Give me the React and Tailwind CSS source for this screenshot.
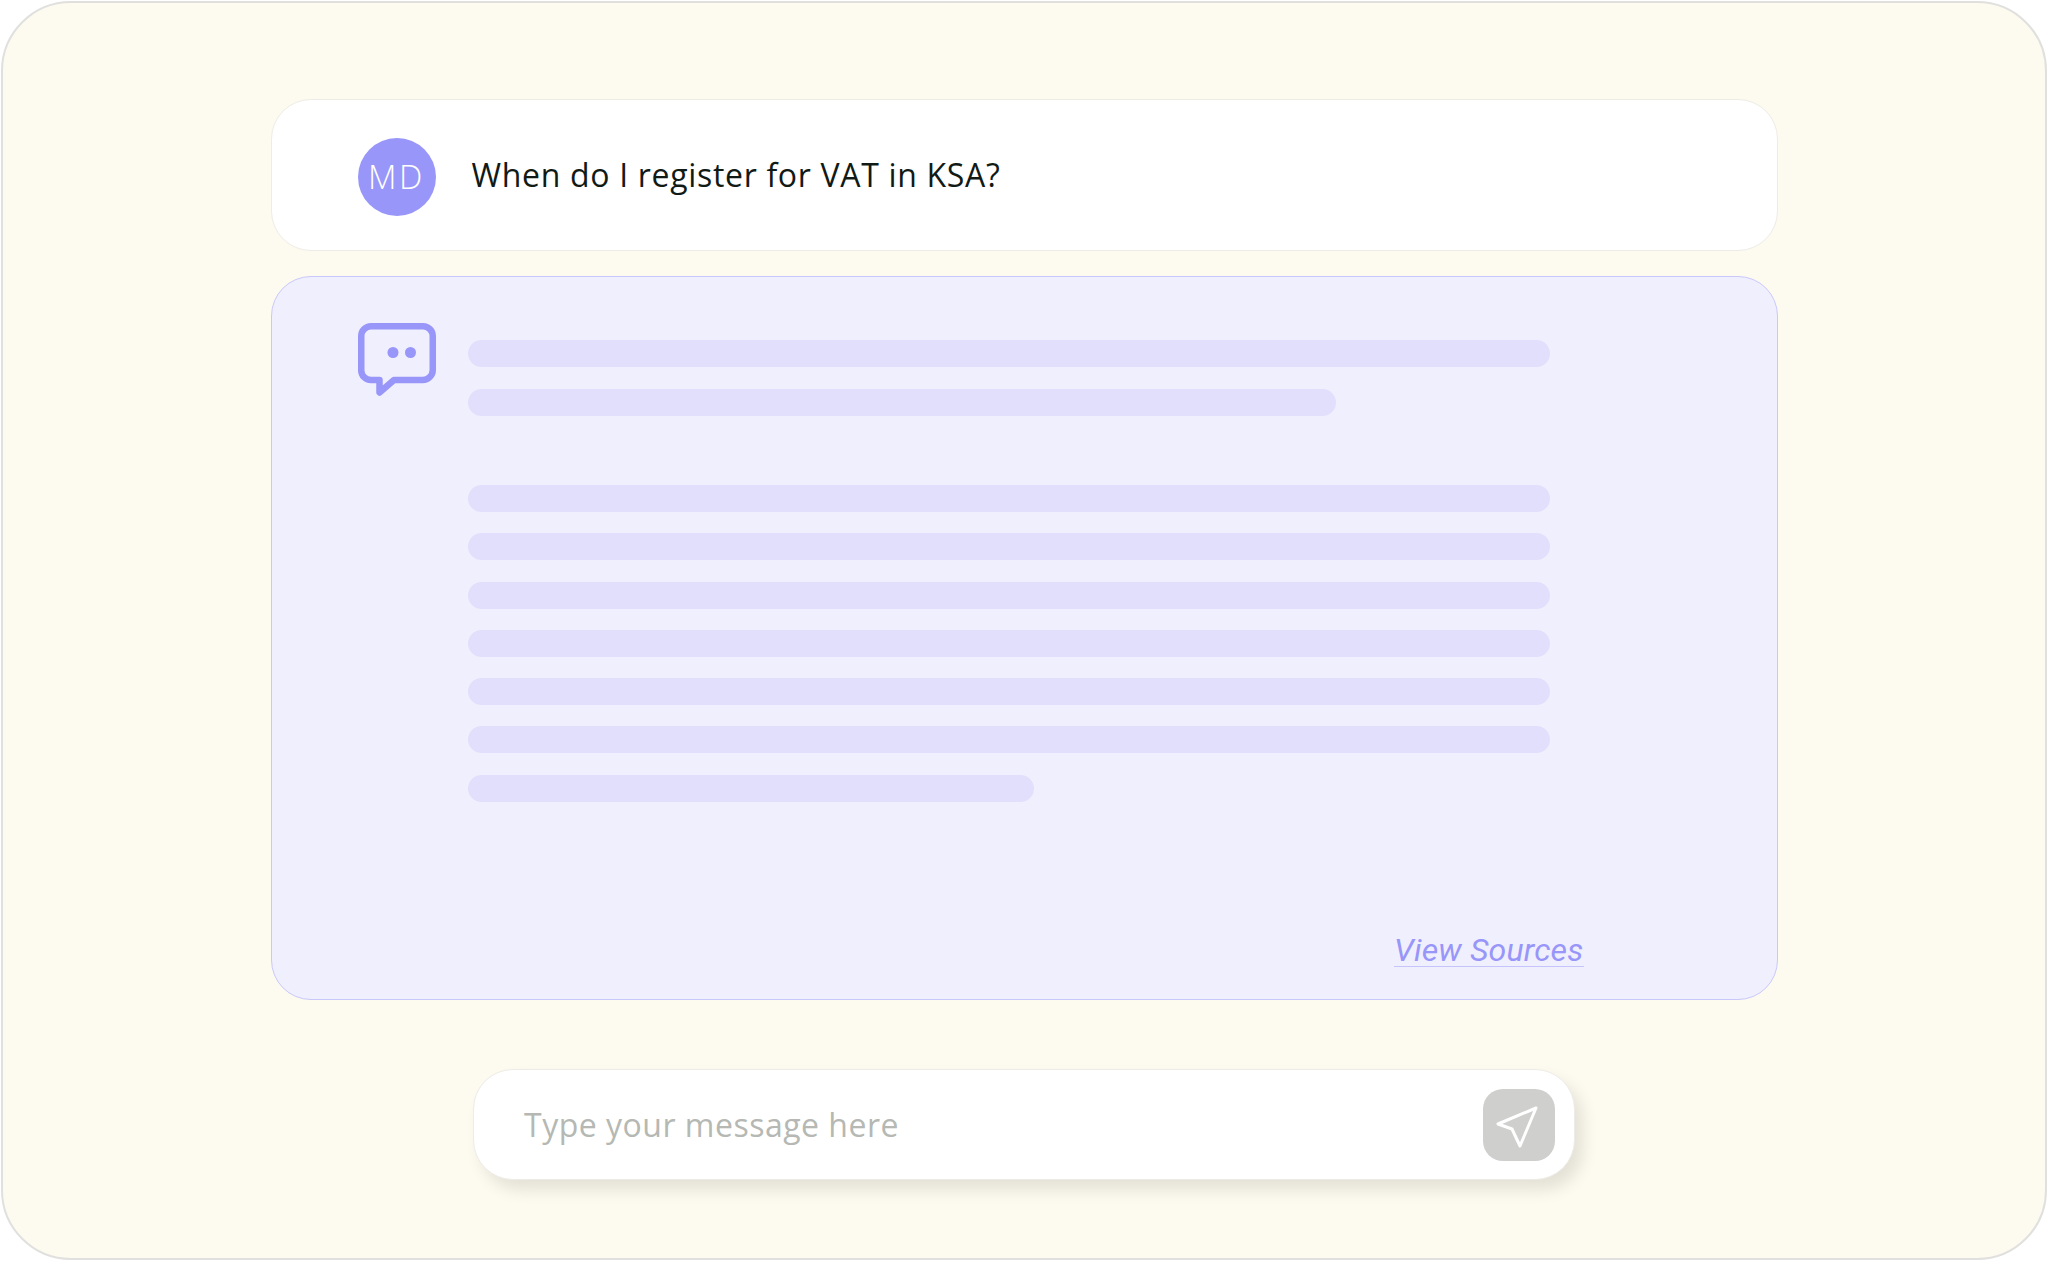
const FONT = "font-['Open_Sans',sans-serif]";

function Bar({ width }) {
  return <div className="h-[27px] rounded-[14px] bg-[#e1dffc]" style={{ width }} />;
}

function BotIcon() {
  return (
    <svg width="78" height="74" viewBox="0 0 78 74" fill="none" className="shrink-0">
      <path
        d="M13 3.25H65a9.75 9.75 0 0 1 9.75 9.75V47a10 10 0 0 1-10 10H36L21.5 69.5V57H13a9.75 9.75 0 0 1-9.75-10V13A9.75 9.75 0 0 1 13 3.25Z"
        stroke="#9896f9"
        strokeWidth="6.5"
        strokeLinejoin="round"
      />
      <circle cx="35" cy="29.5" r="5.5" fill="#9896f9" />
      <circle cx="52.5" cy="29.5" r="5.5" fill="#9896f9" />
    </svg>
  );
}

function SendIcon() {
  return (
    <svg width="72" height="72" viewBox="0 0 72 72" fill="none">
      <path d="M53 19L15 35L29 40L37 57Z" stroke="#ffffff" strokeWidth="3" strokeLinejoin="round" />
    </svg>
  );
}

export default function App() {
  return (
    <div className={`w-[2048px] h-[1261px] bg-white p-px ${FONT}`}>
      <div className="h-full rounded-[70px] border-2 border-[#e0e0de] bg-[#fdfbef] flex flex-col items-center pt-[96px]">
        <div className="w-[1507px] h-[152px] shrink-0 rounded-[40px] border border-[#eeece6] bg-white flex items-center pl-[86px] gap-[36px]">
          <div className="mt-[4px] w-[78px] h-[78px] rounded-full bg-[#9896f9] flex items-center justify-center text-white text-[33px] font-light tracking-[2.5px]">
            MD
          </div>
          <div className="text-[32px] text-[#111a14] tracking-[0.68px]">When do I register for VAT in KSA?</div>
        </div>

        <div className="mt-[25px] w-[1507px] h-[724px] shrink-0 rounded-[40px] border border-[#c9c8fb] bg-[#f0effd] flex flex-col pl-[86px] pt-[46px]">
          <div className="flex items-start gap-[32px]">
            <BotIcon />
            <div className="flex flex-col pt-[17px]">
              <div className="flex flex-col gap-[21.5px]">
                <Bar width={1082} />
                <Bar width={868} />
              </div>
              <div className="flex flex-col gap-[21.3px] mt-[69.5px]">
                <Bar width={1082} />
                <Bar width={1082} />
                <Bar width={1082} />
                <Bar width={1082} />
                <Bar width={1082} />
                <Bar width={1082} />
                <Bar width={566} />
              </div>
            </div>
          </div>
          <div className="mt-auto mb-[32px] self-end mr-[193px] border-b border-[#c5c4fb] text-[32px] leading-[32px] tracking-[0.2px] italic text-[#9896f9] font-['Roboto',sans-serif]">
            View Sources
          </div>
        </div>

        <div className="mt-[69px] w-[1102px] h-[111px] shrink-0 rounded-[40px] border border-[#eeece6] bg-white shadow-[8px_10px_16px_rgba(0,0,0,0.1)] flex items-center justify-between pl-[50px] pr-[19px]">
          <div className="text-[32px] text-[#b5b8b3] tracking-[0.5px]">Type your message here</div>
          <div className="w-[72px] h-[72px] rounded-[20px] bg-[#cfd0cd] flex items-center justify-center">
            <SendIcon />
          </div>
        </div>
      </div>
    </div>
  );
}
